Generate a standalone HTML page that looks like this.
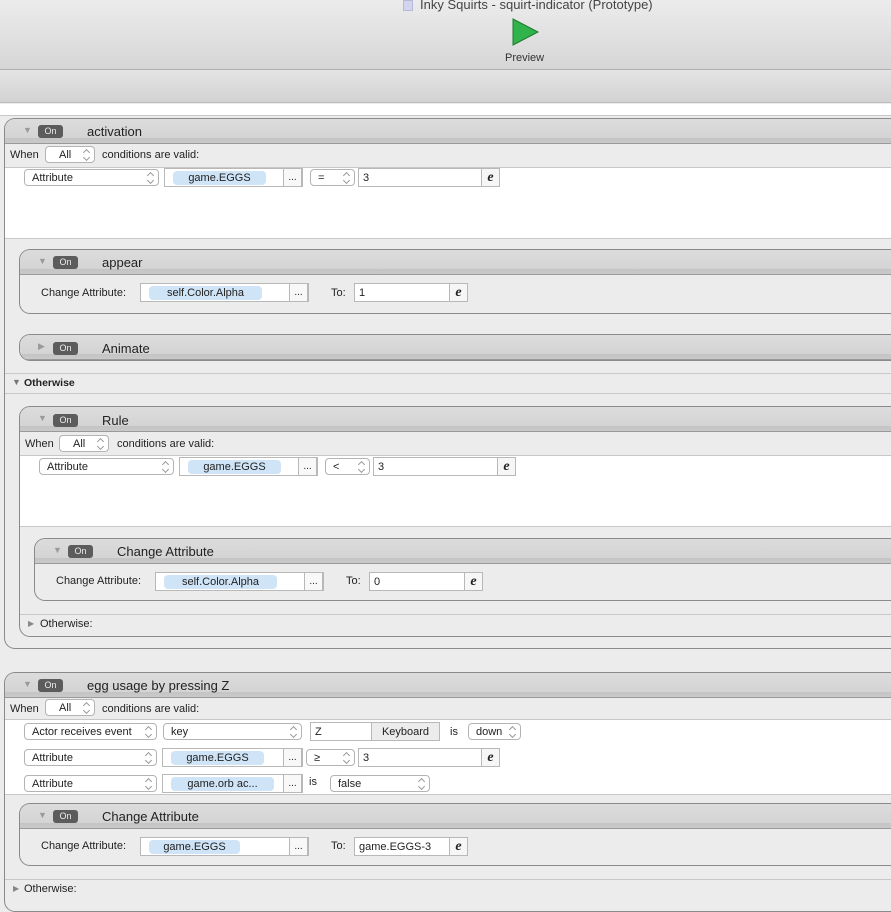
<!DOCTYPE html>
<html><head><meta charset="utf-8"><style>
*{box-sizing:border-box;margin:0;padding:0}
body{width:891px;height:894px;overflow:hidden;background:#ececec;font-family:"Liberation Sans",sans-serif;font-size:11px;color:#222;position:relative}
.a{position:absolute}
.blk{position:absolute;border:1px solid #8a8a8a;border-right:none;border-radius:11px 0 0 11px;background:#ececec;right:-20px;overflow:hidden}
.hdr{position:absolute;left:0;right:0;top:0;height:25px;background:linear-gradient(#dcdcdc 0,#d4d4d4 78%,#c4c4c4 80%,#c9c9c9 100%);border-bottom:1px solid #9a9a9a}
.tri{position:absolute;color:#9a9a9a;font-size:9px}
.on{position:absolute;width:25px;height:13px;background:#5c5c5c;border-radius:3px;color:#eee;font-size:9px;text-align:center;line-height:13px}
.ttl{position:absolute;font-size:13px;color:#222}
.white{position:absolute;background:#fff;border-top:1px solid #c8c8c8;border-bottom:1px solid #c8c8c8}
.sel{position:absolute;height:17px;border:1px solid #b4b4b4;border-radius:4px;background:#fff;padding-left:7px;line-height:17px;font-size:11px}
.sel:after{content:"";position:absolute;right:5px;top:3px;width:4px;height:4px;border-left:1px solid #999;border-top:1px solid #999;transform:rotate(45deg)}
.sel:before{content:"";position:absolute;right:5px;top:8px;width:4px;height:4px;border-right:1px solid #999;border-bottom:1px solid #999;transform:rotate(45deg)}
.box{position:absolute;height:19px;border:1px solid #b8b8b8;background:#fff}
.pill{position:absolute;top:2px;height:14px;background:#cfe4f7;border-radius:4px;text-align:center;line-height:15px;font-size:11px}
.dots{position:absolute;right:0;top:-1px;width:19px;height:19px;border:1px solid #b8b8b8;background:#f8f8f8;text-align:center;font-size:10px;line-height:18px}
.inp{position:absolute;height:19px;border:1px solid #b8b8b8;background:#fff;padding-left:4px;line-height:19px;font-size:11px}
.e{position:absolute;right:-1px;top:-1px;width:19px;height:19px;border:1px solid #b8b8b8;background:#f6f6f6;text-align:center;font:italic bold 14px "Liberation Serif",serif;line-height:17px}
.lbl{position:absolute;font-size:11px}
.line{position:absolute;left:0;right:0;height:1px;background:#c8c8c8}
</style></head><body>
<div class="a" style="left:0;top:0;width:891px;height:70px;background:linear-gradient(#ececec,#d6d6d6);border-bottom:1px solid #b0b0b0"></div>
<div class="a" style="left:403px;top:0;width:10px;height:11px;background:#d4d4f0;border:1px solid #b8b8d8"></div>
<div class="a" style="left:420px;top:-3px;font-size:13px;color:#444">Inky Squirts - squirt-indicator (Prototype)</div>
<svg class="a" style="left:511px;top:18px" width="30" height="28"><polygon points="2,1 27,14 2,27" fill="#2fb34a" stroke="#1f7a30" stroke-width="1"/></svg>
<div class="a" style="left:505px;top:52px;font-size:11px;color:#333">Preview</div>
<div class="a" style="left:0;top:70px;width:891px;height:33px;background:linear-gradient(#e4e4e4,#d2d2d2);border-bottom:1px solid #bcbcbc"></div>
<div class="a" style="left:0;top:104px;width:891px;height:12px;background:#fff;border-bottom:1px solid #c8c8c8"></div>

<div class="blk" style="left:4px;top:118px;height:531px">
 <div class="hdr"></div>
 <div class="white" style="left:0;right:0;top:48px;height:72px"></div>
 <div class="line" style="top:254px"></div><div class="line" style="top:274px"></div>
</div>
<div class="tri" style="left:23px;top:125px">▼</div><div class="on" style="left:38px;top:125px">On</div><div class="ttl" style="left:87px;top:124px">activation</div>
<div class="lbl" style="left:10px;top:149px">When</div>
<div class="sel" style="left:45px;top:146px;width:50px;padding-left:13px">All</div>
<div class="lbl" style="left:102px;top:149px">conditions are valid:</div>
<div class="sel" style="left:24px;top:169px;width:135px">Attribute</div>
<div class="box" style="left:164px;top:168px;width:139px"><div class="pill" style="left:8px;width:93px">game.EGGS</div><div class="dots">...</div></div>
<div class="sel" style="left:310px;top:169px;width:45px">=</div>
<div class="inp" style="left:358px;top:168px;width:142px">3<div class="e">e</div></div>

<div class="blk" style="left:19px;top:249px;height:65px"><div class="hdr"></div></div>
<div class="tri" style="left:38px;top:256px">▼</div><div class="on" style="left:53px;top:256px">On</div><div class="ttl" style="left:102px;top:255px">appear</div>
<div class="lbl" style="left:41px;top:287px">Change Attribute:</div>
<div class="box" style="left:140px;top:283px;width:169px"><div class="pill" style="left:8px;width:113px">self.Color.Alpha</div><div class="dots">...</div></div>
<div class="lbl" style="left:331px;top:287px">To:</div>
<div class="inp" style="left:354px;top:283px;width:114px">1<div class="e">e</div></div>

<div class="blk" style="left:19px;top:334px;height:27px"><div class="hdr"></div></div>
<div class="tri" style="left:38px;top:341px">▶</div><div class="on" style="left:53px;top:342px">On</div><div class="ttl" style="left:102px;top:341px">Animate</div>

<div class="a" style="left:12px;top:377px;font-size:9px;color:#777">▼</div>
<div class="lbl" style="left:24px;top:377px;font-weight:bold;font-size:10.5px">Otherwise</div>

<div class="blk" style="left:19px;top:406px;height:231px">
 <div class="hdr"></div>
 <div class="white" style="left:0;right:0;top:48px;height:72px"></div>
 <div class="line" style="top:207px"></div>
</div>
<div class="tri" style="left:38px;top:413px">▼</div><div class="on" style="left:53px;top:414px">On</div><div class="ttl" style="left:102px;top:413px">Rule</div>
<div class="lbl" style="left:25px;top:438px">When</div>
<div class="sel" style="left:59px;top:435px;width:50px;padding-left:13px">All</div>
<div class="lbl" style="left:117px;top:438px">conditions are valid:</div>
<div class="sel" style="left:39px;top:458px;width:135px">Attribute</div>
<div class="box" style="left:179px;top:457px;width:139px"><div class="pill" style="left:8px;width:93px">game.EGGS</div><div class="dots">...</div></div>
<div class="sel" style="left:325px;top:458px;width:45px">&lt;</div>
<div class="inp" style="left:373px;top:457px;width:143px">3<div class="e">e</div></div>

<div class="blk" style="left:34px;top:538px;height:63px"><div class="hdr"></div></div>
<div class="tri" style="left:53px;top:545px">▼</div><div class="on" style="left:68px;top:545px">On</div><div class="ttl" style="left:117px;top:544px">Change Attribute</div>
<div class="lbl" style="left:56px;top:575px">Change Attribute:</div>
<div class="box" style="left:155px;top:572px;width:169px"><div class="pill" style="left:8px;width:113px">self.Color.Alpha</div><div class="dots">...</div></div>
<div class="lbl" style="left:346px;top:575px">To:</div>
<div class="inp" style="left:369px;top:572px;width:114px">0<div class="e">e</div></div>
<div class="a" style="left:28px;top:619px;font-size:8px;color:#888">▶</div>
<div class="lbl" style="left:40px;top:618px">Otherwise:</div>

<div class="blk" style="left:4px;top:672px;height:240px">
 <div class="hdr"></div>
 <div class="white" style="left:0;right:0;top:46px;height:76px"></div>
 <div class="line" style="top:206px"></div>
</div>
<div class="tri" style="left:23px;top:679px">▼</div><div class="on" style="left:38px;top:679px">On</div><div class="ttl" style="left:87px;top:678px">egg usage by pressing Z</div>
<div class="lbl" style="left:10px;top:703px">When</div>
<div class="sel" style="left:45px;top:699px;width:50px;padding-left:13px">All</div>
<div class="lbl" style="left:102px;top:703px">conditions are valid:</div>
<div class="sel" style="left:24px;top:723px;width:133px">Actor receives event</div>
<div class="sel" style="left:163px;top:723px;width:139px">key</div>
<div class="inp" style="left:310px;top:722px;width:129px">Z<div class="a" style="left:60px;top:-1px;width:69px;height:19px;border:1px solid #b8b8b8;background:#ececec;text-align:center;line-height:19px">Keyboard</div></div>
<div class="lbl" style="left:450px;top:726px">is</div>
<div class="sel" style="left:468px;top:723px;width:53px">down</div>
<div class="sel" style="left:24px;top:749px;width:133px">Attribute</div>
<div class="box" style="left:162px;top:748px;width:141px"><div class="pill" style="left:8px;width:93px">game.EGGS</div><div class="dots">...</div></div>
<div class="sel" style="left:306px;top:749px;width:49px">≥</div>
<div class="inp" style="left:358px;top:748px;width:142px">3<div class="e">e</div></div>
<div class="sel" style="left:24px;top:775px;width:133px">Attribute</div>
<div class="box" style="left:162px;top:774px;width:141px"><div class="pill" style="left:8px;width:103px">game.orb ac...</div><div class="dots">...</div></div>
<div class="lbl" style="left:309px;top:776px">is</div>
<div class="sel" style="left:330px;top:775px;width:100px">false</div>

<div class="blk" style="left:19px;top:803px;height:63px"><div class="hdr"></div></div>
<div class="tri" style="left:38px;top:810px">▼</div><div class="on" style="left:53px;top:810px">On</div><div class="ttl" style="left:102px;top:809px">Change Attribute</div>
<div class="lbl" style="left:41px;top:840px">Change Attribute:</div>
<div class="box" style="left:140px;top:837px;width:169px"><div class="pill" style="left:8px;width:91px">game.EGGS</div><div class="dots">...</div></div>
<div class="lbl" style="left:331px;top:840px">To:</div>
<div class="inp" style="left:354px;top:837px;width:114px">game.EGGS-3<div class="e">e</div></div>
<div class="a" style="left:13px;top:884px;font-size:8px;color:#888">▶</div>
<div class="lbl" style="left:24px;top:883px">Otherwise:</div>
</body></html>
